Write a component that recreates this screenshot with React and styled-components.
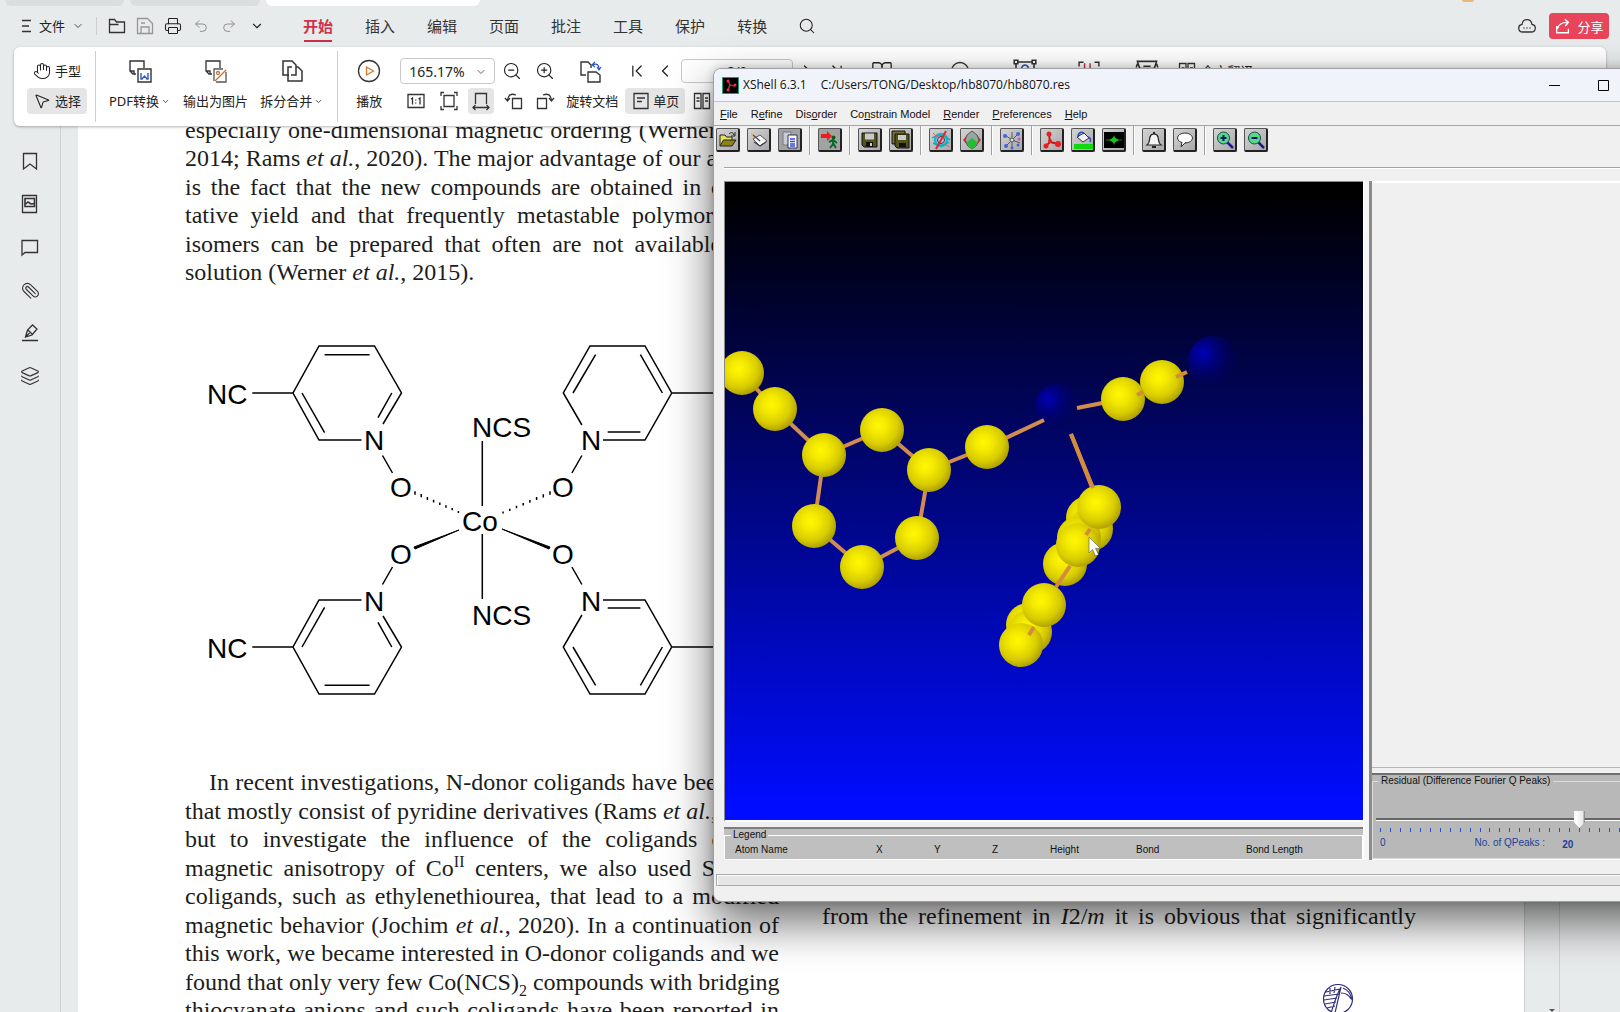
import React, { useState } from "react";
import styled, { createGlobalStyle } from "styled-components";
import {
    Search, ZoomIn, ZoomOut, Printer, Undo2, Redo2, Hand, MousePointer2,
    ChevronDown, ChevronLeft, ChevronRight, ChevronFirst, ChevronLast,
    Bookmark, Paperclip, Layers, BookOpen,
} from "lucide-react";

const GlobalStyle = createGlobalStyle`
  * {
    box-sizing: border-box;
  }
  body {
    margin: 0;
    overflow: hidden;
    background: #e8ebeb;
    color: #222;
    font-family: "Noto Sans", "Noto Sans CJK SC", sans-serif;
  }
  button, input, select {
    font: inherit;
    color: inherit;
    margin: 0;
  }
  svg {
    display: block;
    flex: none;
  }
`;

const Screen = styled.div`
  position: relative;
  height: 100vh;
  overflow: hidden;
  display: flex;
  flex-direction: column;
`;

/* ---------- reader chrome ---------- */

const TabStrip = styled.div`
  display: flex;
  gap: 6px;
  height: 6px;
  padding-left: 5px;
  flex: none;
`;

const DocTab = styled.div`
  width: ${(p) => p.$width}px;
  border-radius: 0 0 6px 6px;
  background: ${(p) => (p.$active ? "#fff" : "#dbdedf")};
`;

const Avatar = styled.div`
  width: 12px;
  height: 2px;
  margin-left: auto;
  margin-right: 146px;
  border-radius: 0 0 6px 6px;
  background: #e8b878;
`;

const MenuRow = styled.div`
  display: flex;
  align-items: center;
  height: 41px;
  padding: 0 11px 1px 20px;
  flex: none;
`;

const PlainButton = styled.button`
  display: flex;
  align-items: center;
  justify-content: center;
  gap: ${(p) => p.$gap || 0}px;
  width: ${(p) => (p.$width ? p.$width + "px" : "auto")};
  height: 26px;
  margin-left: ${(p) => (p.$push ? "auto" : (p.$ml || 0) + "px")};
  padding: 0;
  border: 0;
  border-radius: 4px;
  background: ${(p) => (p.$on ? "#e5e5e5" : "transparent")};
  font-size: 13px;
  line-height: 20px;
  white-space: nowrap;
  flex: none;
  opacity: ${(p) => (p.$dim ? 0.45 : 1)};
`;

const MenuTabs = styled.nav`
  display: flex;
  gap: 32px;
  margin-left: 32px;
`;

const MenuTab = styled.button`
  height: 32px;
  padding: 0;
  border: 0;
  background: linear-gradient(${(p) => (p.$active ? "#c8304a, #c8304a" : "transparent, transparent")}) center bottom / 28px 2px no-repeat;
  color: ${(p) => (p.$active ? "#d0314b" : "#333")};
  font-size: 15px;
  line-height: 24px;
  font-weight: ${(p) => (p.$active ? 700 : 400)};
`;

const ShareButton = styled.button`
  display: flex;
  align-items: center;
  justify-content: center;
  gap: 5px;
  width: 60px;
  height: 26px;
  margin-left: 12px;
  padding: 0;
  border: 0;
  border-radius: 4px;
  background: #e8455b;
  color: #fff;
  font-size: 13px;
`;

const Ribbon = styled.div`
  display: flex;
  position: relative;
  height: 79px;
  margin: 0 14px;
  padding: 0 13px;
  border-radius: 6px;
  background: #fff;
  box-shadow: 0 1px 3px rgba(0, 0, 0, 0.3);
  flex: none;
`;

const RibbonColumn = styled.div`
  display: flex;
  flex-direction: column;
  gap: 4px;
  margin-left: ${(p) => p.$ml || 0}px;
  padding-top: 11px;
`;

const RibbonRow = styled.div`
  display: flex;
  align-items: center;
`;

const Rule = styled.div`
  width: 1px;
  height: ${(p) => p.$height}px;
  margin: ${(p) => p.$margin};
  background: #cdcfcf;
  flex: none;
`;

const BigButton = styled.button`
  display: flex;
  flex-direction: column;
  align-items: center;
  gap: 8px;
  margin-left: ${(p) => p.$ml || 0}px;
  padding: 12px 0 0;
  border: 0;
  background: none;
  font-size: 13px;
  line-height: 20px;
  white-space: nowrap;
`;

const BigLabel = styled.span`
  display: flex;
  align-items: center;
  gap: 2px;
`;

const ZoomBox = styled.label`
  position: relative;
  width: 95px;
`;

const ZoomSelect = styled.select`
  width: 95px;
  height: 26px;
  padding: 0 8px;
  border: 1px solid #c9c9c9;
  border-radius: 4px;
  background: #fff;
  font-size: 14px;
  appearance: none;
`;

const ZoomArrow = styled(ChevronDown)`
  position: absolute;
  right: 8px;
  top: 8px;
  pointer-events: none;
`;

const PageInput = styled.input`
  width: 112px;
  height: 24px;
  margin-left: 4px;
  padding: 0;
  border: 1px solid #c9c9c9;
  border-radius: 4px;
  background: transparent;
  text-align: center;
  font-size: 13px;
`;

/* ---------- document ---------- */

const Body = styled.div`
  display: flex;
  flex: 1;
  min-height: 0;
  overflow: hidden;
`;

const Sidebar = styled.aside`
  display: flex;
  flex-direction: column;
  align-items: center;
  gap: 23px;
  width: 61px;
  padding-top: 25px;
  border-right: 1px solid #cfd2d2;
  flex: none;
`;

const SideButton = styled.button`
  display: flex;
  align-items: center;
  justify-content: center;
  width: 20px;
  height: 20px;
  padding: 0;
  border: 0;
  background: none;
  color: #333;
`;

const Clip = styled(Paperclip)`
  transform: rotate(90deg);
`;

const Paper = styled.main`
  display: flex;
  gap: 43px;
  flex: 1;
  min-width: 0;
  margin: -10px 0 0 17px;
  padding: 0 108px 0 107px;
  border-right: 1px solid #cfd2d2;
  background: #fff;
  color: #1d1d1d;
  font: 24px/28px "Liberation Serif", serif;
`;

const Column = styled.div`
  flex: 1 1 0;
  min-width: 0;
`;

const Paragraph = styled.p`
  display: flex;
  flex-direction: column;
  justify-content: space-between;
  height: ${(p) => p.$height}px;
  margin: 0;
`;

const Line = styled.span`
  display: block;
  white-space: nowrap;
  text-align-last: ${(p) => (p.$last ? "left" : "justify")};
  padding-left: ${(p) => (p.$indent ? 24 : 0)}px;

  sup, sub {
    font-size: 16px;
    line-height: 0;
  }
`;

const Scheme = styled.svg`
  width: 100%;
  height: 380px;
  margin: 45px 0 57px;
  overflow: visible;
`;

const RightText = styled.p`
  margin: 786px 0 54px;
`;

const BallFigure = styled.svg`
  margin-left: 500px;
`;

const ScrollGutter = styled.div`
  display: flex;
  flex-direction: column;
  justify-content: flex-end;
  align-items: flex-end;
  width: 35px;
  padding-right: 4px;
  border-right: 1px solid #cfd2d2;
  flex: none;
`;

const ScrollDown = styled.div`
  width: 0;
  border: 3px solid transparent;
  border-top: 3px solid #555;
  border-bottom: 0;
`;

const RightDock = styled.div`
  width: 60px;
  flex: none;
`;

/* ---------- XShell window ---------- */

const XWindow = styled.section`
  position: absolute;
  left: 713px;
  right: -58px;
  top: 68px;
  display: flex;
  flex-direction: column;
  height: 834px;
  border: 1px solid #9da0a3;
  border-radius: 8px;
  overflow: hidden;
  background: #f0f0f0;
  color: #111;
  font-family: "Liberation Sans", sans-serif;
  font-size: 12px;
  box-shadow: 0 20px 46px rgba(0, 0, 0, 0.58), 0 0 10px rgba(0, 0, 0, 0.2);
`;

const TitleBar = styled.header`
  display: flex;
  align-items: center;
  height: 33px;
  padding-left: 8px;
  border-bottom: 1px solid #c3c5c8;
  background: #f0f3f9;
  font: 12px/16px "Open Sans", sans-serif;
  flex: none;
`;

const TitleText = styled.span`
  margin-left: ${(p) => p.$ml}px;
  white-space: pre;
`;

const WinButton = styled.button`
  display: flex;
  align-items: center;
  justify-content: center;
  width: 49px;
  height: 31px;
  padding: 0;
  border: 0;
  background: none;
  margin-left: ${(p) => (p.$first ? "auto" : 0)};
`;

const XMenu = styled.nav`
  display: flex;
  gap: 13px;
  height: 24px;
  padding: 0 6px;
  border-bottom: 1px solid #a5a5a5;
  font-size: 11px;
  flex: none;
`;

const XMenuItem = styled.button`
  padding: 0;
  border: 0;
  background: none;
  line-height: 20px;
`;

const Toolbar = styled.div`
  display: flex;
  gap: 7px;
  height: 41px;
  margin-right: 10px;
  padding: 2px 0 0 2px;
  flex: none;
`;

const ToolButton = styled.button`
  display: flex;
  align-items: center;
  justify-content: center;
  width: 24px;
  height: 24px;
  padding: 0;
  border: 1px solid #555;
  border-right: 2px solid #222;
  border-bottom: 2px solid #222;
  border-radius: 2px;
  background: ${(p) => (p.$down ? "#a2a2a2" : "linear-gradient(135deg, #d4d4d4, #a8a8a8)")};
`;

const ToolSep = styled.div`
  width: 2px;
  height: 29px;
  margin-top: -2px;
  border-left: 1px solid #a0a0a0;
  border-right: 1px solid #fff;
`;

const Work = styled.div`
  display: flex;
  flex: 1;
  min-height: 0;
  margin-left: 10px;
  padding-top: 13px;
  border-top: 1px solid #a3a3a3;
  box-shadow: inset 0 1px 0 #fff;
`;

const ViewColumn = styled.div`
  display: flex;
  flex-direction: column;
  flex: 1;
  min-width: 0;
`;

const Viewport = styled.div`
  height: 641px;
  border: 1px solid #8a8a8a;
  border-right: 0;
  border-bottom: 2px solid #fff;
  background: linear-gradient(#000 2%, #000cff 98%);
  overflow: hidden;
  flex: none;
`;

const LegendBox = styled.div`
  margin-top: 5px;
  border-top: 2px solid #7d7d7d;
  background: #bfbfbf;
`;

const Legend = styled.fieldset`
  display: flex;
  min-width: 0;
  height: 31px;
  margin: 0;
  padding: 3px 0 0 10px;
  border: 1px solid #fff;
  font-size: 10px;
  line-height: 12px;

  legend {
    margin-left: -4px;
    padding: 0 2px;
  }
`;

const LegendCell = styled.span`
  width: ${(p) => p.$width}px;
  flex: none;
`;

const Splitter = styled.div`
  width: 9px;
  height: 679px;
  border-left: 1px solid #fff;
  border-right: 3px solid #8b8b8b;
  background: #f6f6f6;
  flex: none;
`;

const SidePane = styled.div`
  display: flex;
  flex-direction: column;
  width: 305px;
  height: 679px;
  border-top: 2px solid #fff;
  flex: none;
`;

const EmptyPane = styled.div`
  flex: 1;
  border-bottom: 1px solid #b5b5b5;
`;

const Residual = styled.div`
  height: 87px;
  margin-top: 5px;
  border-top: 2px solid #6f6f6f;
  border-bottom: 1px solid #fff;
  background: #b8b8b8;
`;

const ResidualSet = styled.fieldset`
  min-width: 0;
  height: 84px;
  margin: 0;
  padding: 24px 0 0 3px;
  border: 1px solid #dcdcdc;
  font-size: 10px;
  line-height: 12px;

  legend {
    margin-left: 2px;
    padding: 0 3px;
  }
`;

const PeakSlider = styled.input`
  display: block;
  width: 288px;
  height: 17px;
  margin: 0;
  appearance: none;
  background: linear-gradient(#666 50%, #fff 50%) center / 100% 3px no-repeat;

  &::-webkit-slider-thumb {
    appearance: none;
    width: 11px;
    height: 17px;
    background: linear-gradient(90deg, #fff 15%, #e9e9e9 80%, #888 95%);
    clip-path: polygon(0 0, 100% 0, 100% 65%, 50% 100%, 0 65%);
  }
`;

const Ticks = styled.div`
  display: flex;
  justify-content: space-between;
  width: 280px;
  margin: 0 4px;

  i {
    width: 1px;
    height: 4px;
    background: #2a52c0;
  }
`;

const PeakRow = styled.div`
  display: flex;
  width: 280px;
  padding: 5px 4px;
  color: #1d3f98;
`;

const PeakLabel = styled.label`
  margin-left: 89px;
`;

const PeakValue = styled.output`
  margin-left: 17px;
  font-weight: 700;
  line-height: 16px;
`;

const StatusBar = styled.footer`
  height: 12px;
  margin: 0 0 15px 2px;
  border: 1px solid #a9a9a9;
  border-right: 0;
  background: #e6e6e6;
  box-shadow: inset 1px 1px 0 #fafafa;
  flex: none;
`;

/* ---------- small drawings ---------- */

function Glyph({ children, size = 20, color = "#333", width = 1.3 }) {
    return (
        <svg width={size} height={size} viewBox="0 0 20 20" fill="none" stroke={color} strokeWidth={width}>
            {children}
        </svg>
    );
}

const pdfToWord = (
    <svg width="24" height="24" viewBox="0 0 24 24" fill="none" stroke="#333" strokeWidth="1.4">
        <path d="M8 15H5l-3-3V2h14v7M2 12h4v3" />
        <path d="M10 10h13v13H10z" />
        <path d="M13 14v6h1l2.500-3 2.500 3h1v-6" stroke="#2b57c8" />
    </svg>
);

const pdfToImage = (
    <svg width="24" height="24" viewBox="0 0 24 24" fill="none" stroke="#333" strokeWidth="1.3">
        <path d="M8 15H5l-3-3V2h14v7M2 12h4v3" />
        <path d="M19 10h-9v12M22 13v10H12" stroke="#555" />
        <path d="M11 22L22 11" stroke="#c87230" />
        <circle cx="14" cy="14" r="1.500" stroke="#c87230" />
    </svg>
);

const splitMerge = (
    <svg width="24" height="24" viewBox="0 0 24 24" fill="none" stroke="#333" strokeWidth="1.500">
        <path d="M9 16H3V2h9l4 4v10h-5" />
        <path d="M12 8H8v14h14V12l-4-4h-2" />
    </svg>
);

const play = (
    <svg width="24" height="24" viewBox="0 0 24 24" fill="none" strokeWidth="1.3">
        <circle cx="12" cy="12" r="10.500" stroke="#333" />
        <path d="M9.500 8v8l7-4z" stroke="#d07a30" />
    </svg>
);

const rotateDoc = (
    <svg width="24" height="24" viewBox="0 0 24 24" fill="none" stroke="#333" strokeWidth="1.4">
        <path d="M7 16H2V3h7l3 3v3M9 13h8l4 3v7H9z" />
        <path d="M14 6c4-2 6 0 6 4M16 3l-3 3 3 2M18 8l2 3 2-3" stroke="#2b57c8" strokeWidth="1.200" />
    </svg>
);

const folder = <Glyph><path d="M2.500 16.500v-13h5l2 2.500h8v10.500zM2.500 8.500h9" /></Glyph>;
const save = <Glyph><path d="M2.500 2.500h10l5 5v10h-15zM6 17v-6h8v6M6 7h4" /></Glyph>;
const oneToOne = <Glyph><path d="M2 3.500h16v13H2zM5 8l1.500-1v6.500M12.500 8l1.500-1v6.500M9.700 8.500v1M9.700 11.500v1" /></Glyph>;
const fitPage = <Glyph><path d="M5 4.500h10v11H5zM2 5V1.500h3M15 1.500h3V5M2 15v3.500h3M15 18.500h3V15" /></Glyph>;
const fitWidth = <Glyph><path d="M4.500 13V2.500h11V13M2 16.500h16M4.500 14L2 16.500 4.500 19M15.500 14l2.500 2.500-2.500 2.500" /></Glyph>;
const turnLeft = <Glyph><path d="M8.500 7.500h9v10h-9zM12 4C7 2 4 4 3.500 9M1 7l2.500 3L6 7" /></Glyph>;
const turnRight = <Glyph><path d="M2.500 7.500h9v10h-9zM8 4c5-2 8 0 8.500 5M14 7l2.500 3L19 7" /></Glyph>;
const singlePage = <Glyph><path d="M3 2.500h14v15H3zM6 7h8M6 10.500h5" /></Glyph>;
const twoPages = <Glyph><path d="M2.500 2.500h6.500v15H2.500zM11 2.500h6.500v15H11zM4.500 7h3M4.500 10h3M13 7h3M13 10h3" /></Glyph>;
const cloud = <Glyph><path d="M6 16C.5 16 .5 9 5 8.500 6 2 14 2 15 8.500c4.500.5 4.500 7.500-1 7.500zM6.500 12h1M9.500 12h1M12.500 12h1" /></Glyph>;
const share = <Glyph size={18} color="#fff" width={1.500}><path d="M3 10v7.500h13V13M4 13c1-5 5-7 11-7M12 2.500L16 6l-3.500 4" /></Glyph>;
const thumbs = <Glyph><path d="M2.500 1.500h14v17h-14z" /><path d="M5 4.500h9.500v8H5zM5 10.500l3-2.500 3 2 3.500-.5" strokeWidth="1.600" /></Glyph>;
const note = <Glyph><path d="M2 18V3.500h15.500V15.500H5z" /></Glyph>;
const pen = <Glyph><path d="M2 17.500h16M5.500 14l2-7 5-5 4.500 4-5 6zM8 7l4.500 4.500M5.500 14l4-4" /></Glyph>;
const bookmark = <Glyph><path d="M3.500 2.500h13v15.500L10 13l-6.500 5z" /></Glyph>;

const sideIcons = [
    ["书签", bookmark],
    ["缩略图", thumbs],
    ["注释", note],
    ["附件", <Clip size={19} strokeWidth={1.400} />],
    ["签名", pen],
    ["图层", <Layers size={20} strokeWidth={1.400} />],
];

const tabs = ["开始", "插入", "编辑", "页面", "批注", "工具", "保护", "转换"];

/* ---------- XShell toolbar ---------- */

function Tool({ label, children, down, onClick }) {
    return (
        <ToolButton aria-label={label} $down={down} onClick={onClick}>
            <svg width="20" height="20" viewBox="0 0 20 20" fill="none">{children}</svg>
        </ToolButton>
    );
}

const floppy = (
    <>
        <path d="M2 3h15v14H4l-2-2z" fill="#55521a" stroke="#111" />
        <path d="M5 3.500h9v6H5z" fill="#c9c9c9" />
        <path d="M6 12h7v5H6z" fill="#111" />
        <path d="M10 13h2v3h-2z" fill="#ccc" />
    </>
);

const toolGroups = [
    [
        ["Open", <><path d="M2 16V5h5l1.500 2H14v3" fill="#e8e060" stroke="#222" /><path d="M2 16l3.500-6H18l-4 6z" fill="#8a8418" stroke="#222" /><path d="M11 4c2-2 4-2 5 1M17 2v4h-4" stroke="#222" /></>],
        ["Edit", <><path d="M4 9l7-4 7 6-7 5z" fill="#f4f4f4" stroke="#555" /><path d="M4 5l7 6M5 12l6 4 6-4" stroke="#445" strokeWidth="1.200" /><path d="M2 3l3 1-2 2z" fill="#e8b030" /></>],
        ["Listing", <><path d="M3 2h8v13H3z" fill="#c9ccd8" stroke="#778" /><path d="M8 5h9v13H8z" fill="#fff" stroke="#335" /><path d="M10 9h5M10 11.500h5M10 14h5M10 16h5" stroke="#3548e0" strokeWidth="1.300" /></>, true],
    ],
    [
        ["Run", <><path d="M1 4h6V1l5 5-5 5V8H1z" fill="#ee1c1c" /><circle cx="13.500" cy="7.500" r="2" fill="#0a5a20" /><path d="M13 9v5l-3 4M13 13l3 5M9 12l4-2 4 3" stroke="#0a6a28" strokeWidth="2" /></>, true],
    ],
    [
        ["Save", floppy],
        ["Save all", <><path d="M1 1h13v13H1z" fill="#77732c" stroke="#111" /><path d="M4 4h14v14H6l-2-2z" fill="#55521a" stroke="#111" /><path d="M7 5h8v5H7z" fill="#c9c9c9" /><path d="M8 13h7v4H8z" fill="#111" /></>],
    ],
    [
        ["Ellipsoid", <><circle cx="10" cy="10" r="6" stroke="#18b8c8" strokeWidth="2.500" /><path d="M1 8c6-4 12-3 18 2M2 13c5 3 11 3 16-1" stroke="#18a8b8" strokeWidth="1.500" /><circle cx="10" cy="10" r="3.500" fill="#b8c8d8" stroke="#335" /><path d="M5 19L15 1" stroke="#ee2233" strokeWidth="2" /><path d="M2 3l4 4M14 14l4 3" stroke="#ee5566" /></>],
        ["Polyhedron", <><path d="M1 10l5-6v12zM19 10l-5-6v12z" fill="#ee2222" /><path d="M10 1l5 4 2 5-3 6-4 3-4-3-3-6 2-5z" fill="#98a4a4" stroke="#555" /><path d="M10 8l5 4-2 5-3 2-3-2-2-5z" fill="#20c030" /></>],
    ],
    [
        ["Pack", <><path d="M10 10L3 5M10 10l6-6M10 10l8 3M10 10L4 16M10 10v9M10 10V2" stroke="#556" /><circle cx="10" cy="10" r="2" fill="#ddd" stroke="#555" /><circle cx="3" cy="6" r="2" fill="#4864e0" /><circle cx="16" cy="4" r="2" fill="#4864e0" /><circle cx="4" cy="16" r="2" fill="#4864e0" /><circle cx="10" cy="18" r="1.500" fill="#4864e0" /><circle cx="17" cy="9" r="1.500" fill="#d050d0" /><circle cx="16" cy="15" r="1.500" fill="#4864e0" /></>],
    ],
    [
        ["Ball and stick", <><path d="M7 4l1 8-4 4M8 12l8 2" stroke="#c01818" strokeWidth="2" /><circle cx="7" cy="4" r="2.500" fill="#e82020" /><circle cx="8" cy="11" r="2" fill="#e82020" /><circle cx="4" cy="16" r="2.500" fill="#e82020" /><circle cx="16" cy="14" r="3" fill="#e82020" /></>],
        ["Background", <><path d="M1 14h19v5H1z" fill="#12d812" /><path d="M4 7l7-4 5 5-6 4z" fill="#f2f2f2" stroke="#333" /><path d="M5 7c0-5 5-6 6-3M15 7c3 1 3 3 2 5" stroke="#2848c0" strokeWidth="1.500" /></>],
        ["Map", <><path d="M0 2h20v16H0z" fill="#000" /><path d="M2 10h16" stroke="#0a8a0a" /><path d="M10 5l1 3 4 2-4 2-1 3-1-3-4-2 4-2z" fill="#18c818" /><circle cx="10" cy="10" r="2.500" fill="#18c818" /></>],
    ],
    [
        ["Alarm", <><path d="M3 15c3-2 2-4 3-8 1-4 7-4 8 0 1 4 0 6 3 8z" fill="#f4f4f4" stroke="#222" strokeWidth="1.200" /><path d="M8 16h4v2H8zM9 2h2v2H9z" fill="#222" /></>],
        ["Comment", <><ellipse cx="10" cy="8" rx="7.500" ry="5" fill="#fff" stroke="#333" /><path d="M7 12l-1 5 5-5" fill="#fff" stroke="#333" /></>],
    ],
    [
        ["Zoom in", <><path d="M12 12l6 6" stroke="#1a1a8a" strokeWidth="2.500" /><circle cx="8.500" cy="8" r="6" fill="#58d888" stroke="#124a4a" /><path d="M8.500 5v6M5.500 8h6" stroke="#0c1468" strokeWidth="2" /></>],
        ["Zoom out", <><path d="M12 12l6 6" stroke="#1a1a8a" strokeWidth="2.500" /><circle cx="8.500" cy="8" r="6" fill="#58d888" stroke="#124a4a" /><path d="M5.500 8h6" stroke="#0c1468" strokeWidth="2" /></>],
    ],
];

/* ---------- structures ---------- */

function ReactionScheme() {
    // skeleton of the upper half, mirrored about y = 519 for the lower half
    const half = (
        <>
            <path d="M361.500 439H319L293 392l26-47h55.500l27 47-18.500 31M324.600 353.700h45M391.800 392L378 416.700M302 392l22.600 39.700M252.300 392H293" />
            <path d="M603 439h42l26.700-47-26.700-47H590l-26.700 47 18.600 32M595.600 353.700L573 392M640.400 353.700l22 38.300M607.700 431h32.700M671.700 392H736" />
            <path d="M382.500 454.500l10 17.500M581.900 454.500l-10 17.500M482.300 440v65" />
        </>
    );
    const labels = [
        ["NC", 207, 403], ["N", 364, 449], ["NCS", 472, 436], ["N", 581, 449],
        ["O", 390, 496], ["O", 552, 496], ["Co", 462, 530], ["O", 390, 563], ["O", 552, 563],
        ["N", 364, 610], ["N", 581, 610], ["NCS", 472, 624], ["NC", 207, 657],
    ];
    const dots = [0, 1, 2, 3, 4, 5, 6, 7];
    return (
        <Scheme viewBox="185 330 594 380" preserveAspectRatio="xMinYMin meet" role="img" aria-label="Cobalt complex">
            <g fill="none" stroke="#000" strokeWidth="1.500">
                {half}
                <g transform="matrix(1 0 0 -1 0 1038)">{half}</g>
                {dots.map((i) => (
                    <path
                        key={i}
                        d={`M${415 + i * 6.2} ${492 + i * 2.7 - (1.7 - i * 0.1)}v${(1.7 - i * 0.1) * 2}M${550 - i * 6.7} ${492 + i * 2.8 - (1.7 - i * 0.1)}v${(1.7 - i * 0.1) * 2}`}
                    />
                ))}
            </g>
            <path d="M459 529l-45 17 1 2zM502 528l48 18-1 2z" fill="#000" stroke="#000" />
            <g fill="#000" fontFamily="Liberation Sans, sans-serif" fontSize="28">
                {labels.map(([t, x, y]) => <text key={t + x + y} x={x} y={y}>{t}</text>)}
            </g>
        </Scheme>
    );
}

const bonds = [
    [742, 373, 775, 409], [775, 409, 824, 455], [824, 455, 882, 430], [882, 430, 929, 470],
    [929, 470, 987, 447], [987, 447, 1044, 420], [824, 455, 814, 526], [814, 526, 862, 567],
    [862, 567, 917, 538], [917, 538, 929, 470], [1077, 408, 1123, 399], [1071, 434, 1095, 495],
];
const atoms = [
    [742, 373], [775, 409], [882, 430], [824, 455], [929, 470], [987, 447], [814, 526],
    [862, 567], [917, 538], [1162, 382], [1123, 399], [1088, 518], [1091, 529], [1079, 538], [1099, 507],
    [1065, 564], [1078, 545], [1028, 625], [1030, 632], [1044, 605], [1021, 645],
];
const frontBonds = [
    [1071, 434, 1093, 488], [1137, 395, 1143, 392], [1176, 377, 1187, 372],
    [1090, 529, 1086, 535], [1070, 566, 1056, 587], [1034, 627, 1029, 635],
];

function Molecule() {
    return (
        <svg width="100%" height="639" viewBox="725 182 638 639" preserveAspectRatio="xMinYMin slice" role="img" aria-label="hb8070 model">
            <defs>
                <radialGradient id="carbon" cx="0.42" cy="0.4" r="0.62">
                    <stop offset="0" stopColor="#fff800" />
                    <stop offset="0.3" stopColor="#f4ea00" />
                    <stop offset="0.7" stopColor="#d8cc00" />
                    <stop offset="1" stopColor="#ac9e00" />
                </radialGradient>
                <radialGradient id="cobalt" cx="0.3" cy="0.35" r="0.7">
                    <stop offset="0" stopColor="#0000b8" />
                    <stop offset="0.4" stopColor="#000080" stopOpacity="0.9" />
                    <stop offset="1" stopColor="#00005c" stopOpacity="0.1" />
                </radialGradient>
            </defs>
            <circle cx="1057" cy="406" r="22" fill="url(#cobalt)" />
            <circle cx="1213" cy="361" r="25" fill="url(#cobalt)" />
            <g stroke="#d28c52" strokeWidth="4">
                {bonds.map(([a, b, c, d]) => <line key={a + "-" + b + "-" + c} x1={a} y1={b} x2={c} y2={d} />)}
            </g>
            {atoms.map(([x, y]) => <circle key={x + "-" + y} cx={x} cy={y} r="22" fill="url(#carbon)" />)}
            <g stroke="#d28c3c" strokeWidth="4">
                {frontBonds.map(([a, b, c, d]) => <line key={a + "-" + b} x1={a} y1={b} x2={c} y2={d} />)}
            </g>
            <path d="M1089 537v16l3.500-3.500 3 6.500 3-1.500-3-6h5z" fill="#fff" stroke="#555" strokeWidth="0.600" />
        </svg>
    );
}

function Reader() {
    const [tab, setTab] = useState("开始");
    const [page, setPage] = useState("2/9");

    return (
        <>
            <TabStrip>
                <DocTab $width={119} />
                <DocTab $width={130} />
                <DocTab $width={214} $active />
                <Avatar />
            </TabStrip>
            <MenuRow>
                <PlainButton $gap={7}>
                    <svg width="12" height="14" viewBox="0 0 12 14" stroke="#333" strokeWidth="1.300"><path d="M2 1.500h9M2 7h7M2 12.500h9" /></svg>
                    文件
                    <ChevronDown size={12} strokeWidth={1.600} />
                </PlainButton>
                <Rule $height={18} $margin="0 0 0 12px" />
                <PlainButton aria-label="打开" $width={28} $ml={6}>{folder}</PlainButton>
                <PlainButton aria-label="保存" $width={28} $dim>{save}</PlainButton>
                <PlainButton aria-label="打印" $width={28}><Printer size={18} strokeWidth={1.400} /></PlainButton>
                <PlainButton aria-label="撤销" $width={28} $dim><Undo2 size={16} strokeWidth={1.500} /></PlainButton>
                <PlainButton aria-label="恢复" $width={28} $dim><Redo2 size={16} strokeWidth={1.500} /></PlainButton>
                <PlainButton aria-label="更多" $width={28}><ChevronDown size={14} strokeWidth={2} /></PlainButton>
                <MenuTabs>
                    {tabs.map((t) => (
                        <MenuTab key={t} $active={t === tab} onClick={() => setTab(t)}>{t}</MenuTab>
                    ))}
                </MenuTabs>
                <PlainButton aria-label="搜索" $width={28} $ml={26}><Search size={18} strokeWidth={1.400} /></PlainButton>
                <PlainButton aria-label="云同步" $width={20} $push>{cloud}</PlainButton>
                <ShareButton>{share}分享</ShareButton>
            </MenuRow>
            <Ribbon>
                <RibbonColumn>
                    <PlainButton $width={60} $gap={4}><Hand size={18} strokeWidth={1.400} />手型</PlainButton>
                    <PlainButton $width={60} $gap={4} $on><MousePointer2 size={18} strokeWidth={1.400} />选择</PlainButton>
                </RibbonColumn>
                <Rule $height={71} $margin="4px 0 0 8px" />
                <BigButton $ml={13}>{pdfToWord}<BigLabel>PDF转换<ChevronDown size={9} /></BigLabel></BigButton>
                <BigButton $ml={13}>{pdfToImage}<BigLabel>输出为图片</BigLabel></BigButton>
                <BigButton $ml={12}>{splitMerge}<BigLabel>拆分合并<ChevronDown size={9} /></BigLabel></BigButton>
                <Rule $height={71} $margin="4px 0 0 14px" />
                <BigButton $ml={18}>{play}<BigLabel>播放</BigLabel></BigButton>
                <RibbonColumn $ml={18}>
                    <RibbonRow>
                        <ZoomBox>
                            <ZoomSelect aria-label="缩放" defaultValue="165.17%">
                                <option>165.17%</option>
                            </ZoomSelect>
                            <ZoomArrow size={12} strokeWidth={1.400} />
                        </ZoomBox>
                        <PlainButton aria-label="缩小" $width={24} $ml={5}><ZoomOut size={20} strokeWidth={1.400} /></PlainButton>
                        <PlainButton aria-label="放大" $width={24} $ml={9}><ZoomIn size={20} strokeWidth={1.400} /></PlainButton>
                        <PlainButton aria-label="旋转" $width={24} $ml={22}>{rotateDoc}</PlainButton>
                        <PlainButton aria-label="首页" $width={24} $ml={22}><ChevronFirst size={20} strokeWidth={1.500} /></PlainButton>
                        <PlainButton aria-label="上一页" $width={24} $ml={4}><ChevronLeft size={20} strokeWidth={1.500} /></PlainButton>
                        <PageInput aria-label="页码" value={page} onChange={(e) => setPage(e.target.value)} />
                        <PlainButton aria-label="下一页" $width={24} $ml={2}><ChevronRight size={20} strokeWidth={1.500} /></PlainButton>
                        <PlainButton aria-label="末页" $width={24} $ml={6}><ChevronLast size={20} strokeWidth={1.500} /></PlainButton>
                        <PlainButton aria-label="阅读" $width={24} $ml={21}><BookOpen size={22} strokeWidth={1.400} /></PlainButton>
                        <PlainButton aria-label="查找" $width={24} $ml={54}>
                            <Glyph><circle cx="10" cy="10" r="8.500" /></Glyph>
                        </PlainButton>
                        <PlainButton aria-label="编辑内容" $width={24} $ml={41}>
                            <Glyph size={24}><path d="M4 2.500h12M2.500 4v12M17.500 4v12M1 1h3v3H1zM16 1h3v3h-3z" /><path d="M7 8c1-4 5-4 6 0" stroke="#2b57c8" /></Glyph>
                        </PlainButton>
                        <PlainButton aria-label="裁剪" $width={24} $ml={40}>
                            <Glyph size={22}><path d="M1 6V2h4M15 2h4v4" /><path d="M6 3v12M11 3v12M6 8h8" stroke="#c03040" /></Glyph>
                        </PlainButton>
                        <PlainButton aria-label="压缩" $width={24} $ml={34}>
                            <Glyph size={24}><path d="M2 2h16l-2 6H4zM1 7l1-3M19 7l-1-3M7 6h6" /></Glyph>
                        </PlainButton>
                        <PlainButton $gap={4} $ml={18}>{twoPages}全文翻译</PlainButton>
                    </RibbonRow>
                    <RibbonRow>
                        <PlainButton aria-label="实际大小" $width={24} $ml={4}>{oneToOne}</PlainButton>
                        <PlainButton aria-label="适合页面" $width={24} $ml={9}>{fitPage}</PlainButton>
                        <PlainButton aria-label="适合宽度" $width={26} $ml={7} $on>{fitWidth}</PlainButton>
                        <PlainButton aria-label="向左旋转" $width={24} $ml={8}>{turnLeft}</PlainButton>
                        <PlainButton aria-label="向右旋转" $width={24} $ml={7}>{turnRight}</PlainButton>
                        <PlainButton $ml={9}>旋转文档</PlainButton>
                        <PlainButton $width={60} $gap={2} $ml={7} $on>{singlePage}单页</PlainButton>
                        <PlainButton $gap={8} $ml={7}>{twoPages}双页</PlainButton>
                    </RibbonRow>
                </RibbonColumn>
            </Ribbon>
            <Body>
                <Sidebar>
                    {sideIcons.map(([label, icon]) => (
                        <SideButton key={label} aria-label={label}>{icon}</SideButton>
                    ))}
                </Sidebar>
                <Paper>
                    <Column>
                        <Paragraph $height={170}>
                            <Line>especially one-dimensional magnetic ordering (Werner <i>et al.</i>,</Line>
                            <Line>2014; Rams <i>et al.</i>, 2020). The major advantage of our approach</Line>
                            <Line>is the fact that the new compounds are obtained in quanti-</Line>
                            <Line>tative yield and that frequently metastable polymorphs or</Line>
                            <Line>isomers can be prepared that often are not available from</Line>
                            <Line $last>solution (Werner <i>et al.</i>, 2015).</Line>
                        </Paragraph>
                        <ReactionScheme />
                        <Paragraph $height={256}>
                            <Line $indent>In recent investigations, N-donor coligands have been used</Line>
                            <Line>that mostly consist of pyridine derivatives (Rams <i>et al.</i>, 2020),</Line>
                            <Line>but to investigate the influence of the coligands on the</Line>
                            <Line>magnetic anisotropy of Co<sup>II</sup> centers, we also used S-donor</Line>
                            <Line>coligands, such as ethylenethiourea, that lead to a modified</Line>
                            <Line>magnetic behavior (Jochim <i>et al.</i>, 2020). In a continuation of</Line>
                            <Line>this work, we became interested in O-donor coligands and we</Line>
                            <Line>found that only very few Co(NCS)<sub>2</sub> compounds with bridging</Line>
                            <Line>thiocyanate anions and such coligands have been reported in</Line>
                        </Paragraph>
                    </Column>
                    <Column>
                        <RightText>
                            <Line>from the refinement in <i>I</i>2/<i>m</i> it is obvious that significantly</Line>
                        </RightText>
                        <BallFigure width="32" height="32" viewBox="0 0 32 32" fill="none" stroke="#33307a" strokeWidth="1.200">
                            <circle cx="16" cy="15" r="14.500" />
                            <path d="M19 3C14 12 12 20 9 29M21 4c5 2 8 6 9 12M4 8l14-3M2 12l15-2M2 16l13-2M3 20l11-2M5 24l8-2M8 4v6M13 3l-1 6M19 3l-6 26M19 9c4 0 8 2 10 6" />
                        </BallFigure>
                    </Column>
                </Paper>
                <ScrollGutter><ScrollDown /></ScrollGutter>
                <RightDock />
            </Body>
        </>
    );
}

function XShell() {
    const [peaks, setPeaks] = useState(20);

    return (
        <XWindow>
            <TitleBar>
                <svg width="17" height="17" viewBox="0 0 17 17">
                    <path d="M.5.5h16v16H.5z" fill="#000" stroke="#1f9a78" />
                    <path d="M6 3l2 5-2 5M8 8l5 1" stroke="#c02838" strokeWidth="1.500" fill="none" />
                    <circle cx="6" cy="4" r="1.500" fill="#e83048" /><circle cx="6" cy="13" r="1.500" fill="#e83048" /><circle cx="13" cy="8" r="1.500" fill="#e83048" />
                </svg>
                <TitleText $ml={4}>XShell 6.3.1</TitleText>
                <TitleText $ml={14}>C:/Users/TONG/Desktop/hb8070/hb8070.res</TitleText>
                <WinButton aria-label="Minimize" $first><svg width="11" height="11" stroke="#000"><path d="M0 5.500h11" /></svg></WinButton>
                <WinButton aria-label="Maximize"><svg width="11" height="11" fill="none" stroke="#000"><path d="M.5.5h10v10H.5z" /></svg></WinButton>
                <WinButton aria-label="Close"><svg width="11" height="11" stroke="#000"><path d="M0 0l11 11M11 0L0 11" /></svg></WinButton>
            </TitleBar>
            <XMenu>
                <XMenuItem><u>F</u>ile</XMenuItem>
                <XMenuItem>R<u>e</u>fine</XMenuItem>
                <XMenuItem>Dis<u>o</u>rder</XMenuItem>
                <XMenuItem>Co<u>n</u>strain Model</XMenuItem>
                <XMenuItem><u>R</u>ender</XMenuItem>
                <XMenuItem><u>P</u>references</XMenuItem>
                <XMenuItem><u>H</u>elp</XMenuItem>
            </XMenu>
            <Toolbar>
                {toolGroups.map((group, i) => (
                    <React.Fragment key={i}>
                        {i > 0 && <ToolSep />}
                        {group.map(([label, icon, down]) => (
                            <Tool key={label} label={label} down={down}>{icon}</Tool>
                        ))}
                    </React.Fragment>
                ))}
            </Toolbar>
            <Work>
                <ViewColumn>
                    <Viewport><Molecule /></Viewport>
                    <LegendBox>
                        <Legend>
                            <legend>Legend</legend>
                            <LegendCell $width={141}>Atom Name</LegendCell>
                            <LegendCell $width={58}>X</LegendCell>
                            <LegendCell $width={58}>Y</LegendCell>
                            <LegendCell $width={58}>Z</LegendCell>
                            <LegendCell $width={86}>Height</LegendCell>
                            <LegendCell $width={110}>Bond</LegendCell>
                            <LegendCell $width={60}>Bond Length</LegendCell>
                        </Legend>
                    </LegendBox>
                </ViewColumn>
                <Splitter />
                <SidePane>
                    <EmptyPane />
                    <Residual>
                        <ResidualSet>
                            <legend>Residual (Difference Fourier Q Peaks)</legend>
                            <PeakSlider id="peaks" type="range" min="0" max="28" value={peaks} onChange={(e) => setPeaks(e.target.value)} />
                            <Ticks>{Array.from({ length: 29 }, (_, i) => <i key={i} />)}</Ticks>
                            <PeakRow>
                                <span>0</span>
                                <PeakLabel htmlFor="peaks">No. of QPeaks :</PeakLabel>
                                <PeakValue>{peaks}</PeakValue>
                            </PeakRow>
                        </ResidualSet>
                    </Residual>
                </SidePane>
            </Work>
            <StatusBar />
        </XWindow>
    );
}

function App() {
    return (
        <Screen>
            <GlobalStyle />
            <Reader />
            <XShell />
        </Screen>
    );
}

export default App;
